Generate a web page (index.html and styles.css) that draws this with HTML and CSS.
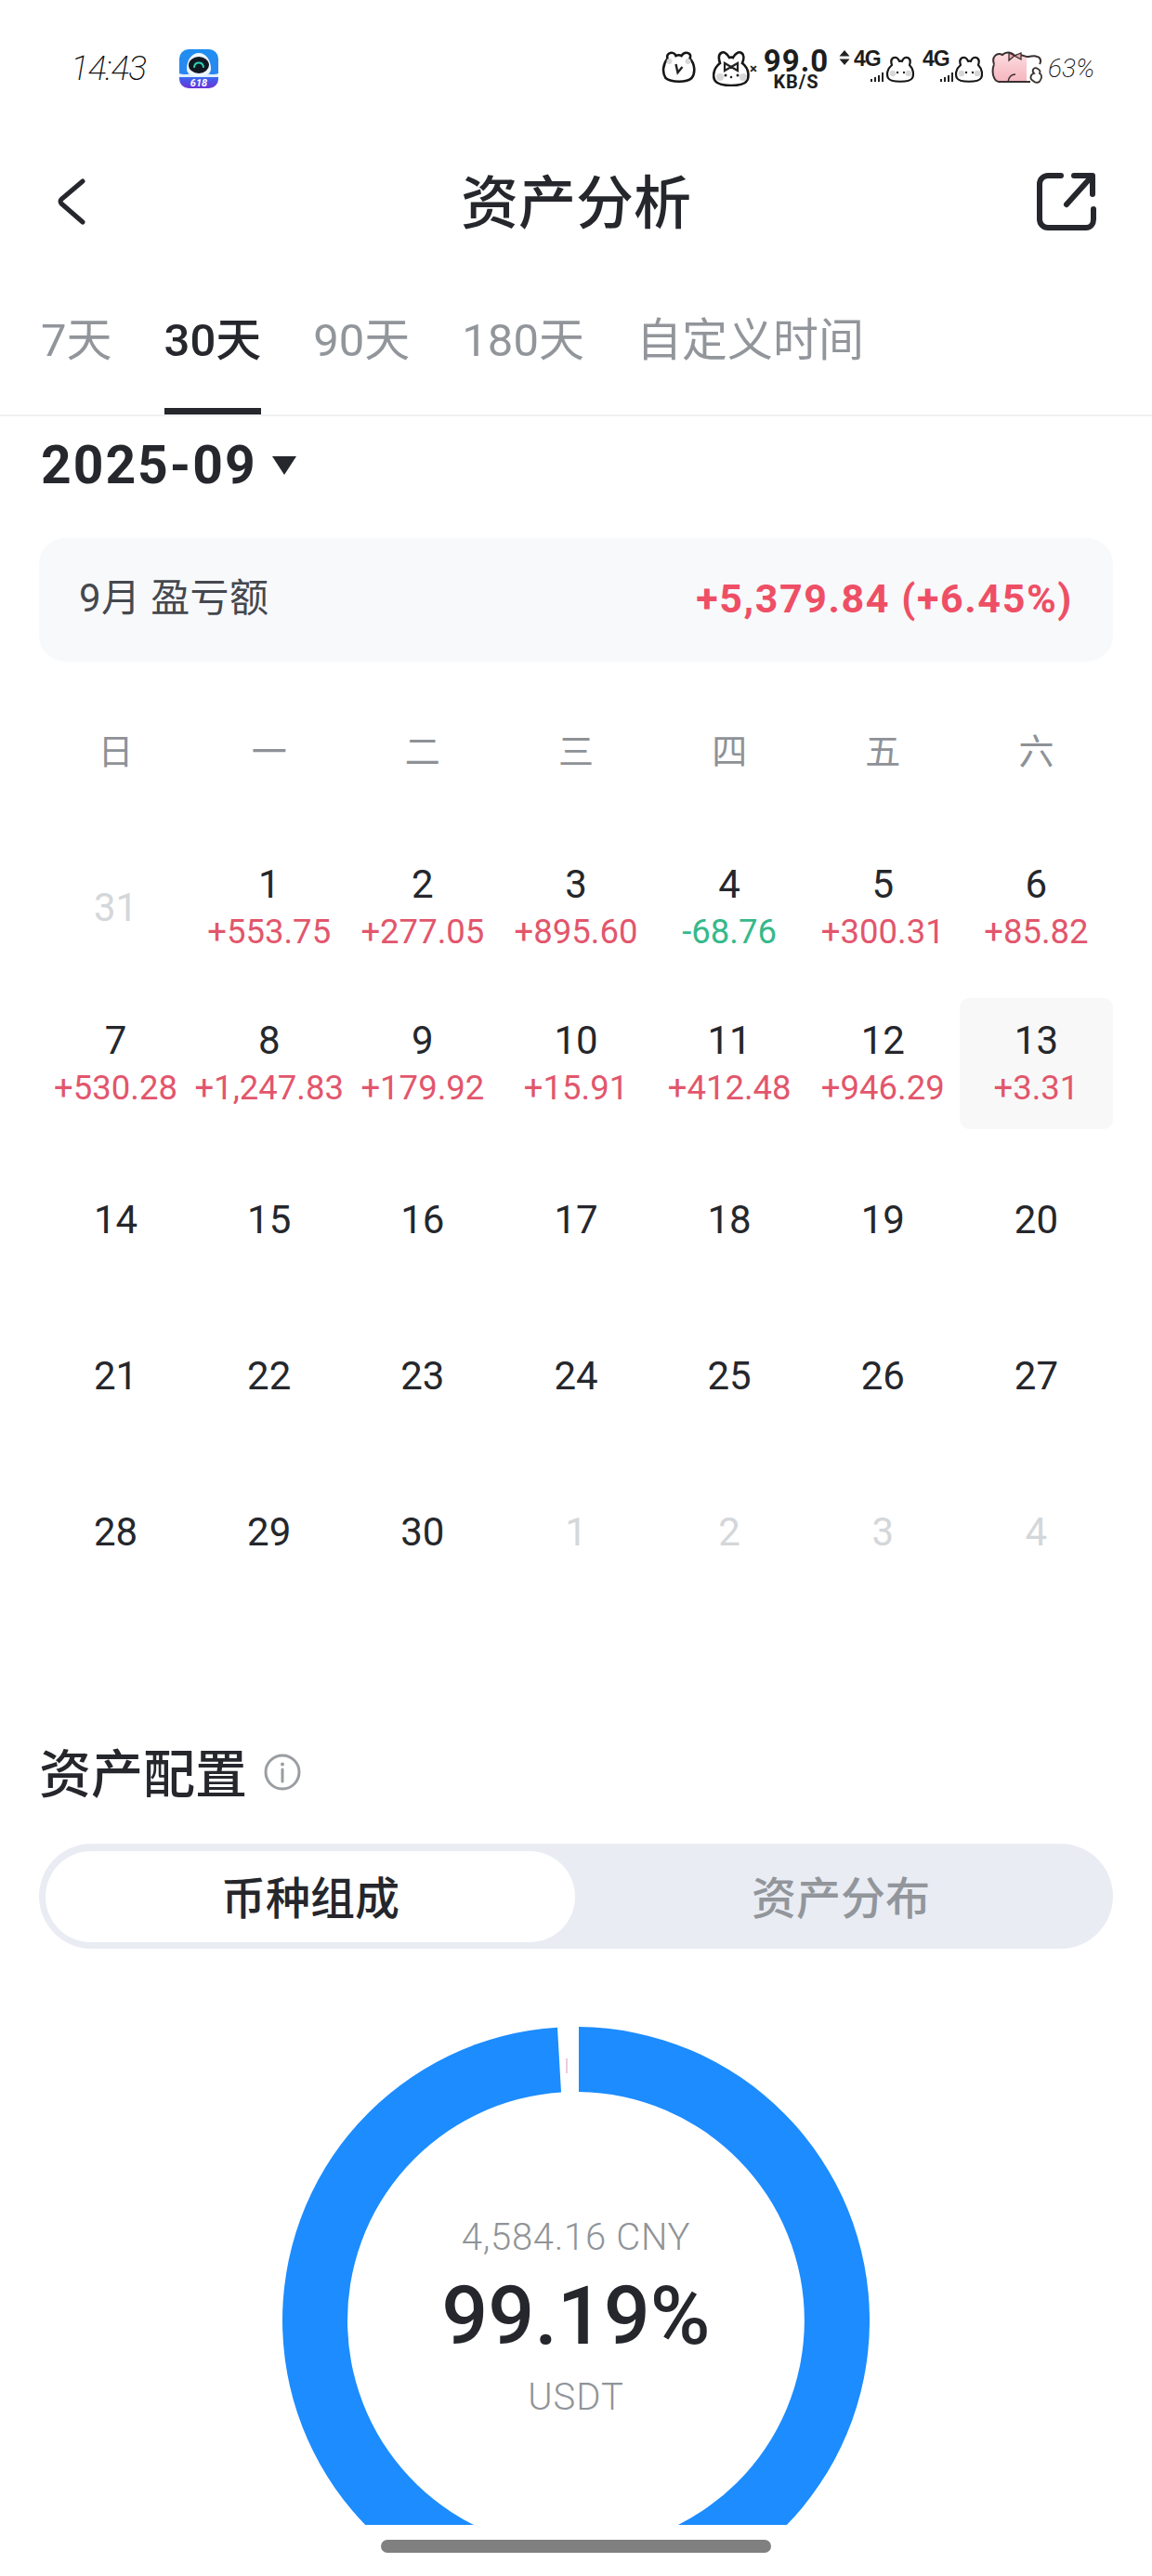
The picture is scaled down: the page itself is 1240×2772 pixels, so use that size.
FILE: index.html
```html
<!DOCTYPE html>
<html lang="zh-CN">
<head>
<meta charset="utf-8">
<title>资产分析</title>
<link rel="stylesheet" href="styles.css">
</head>
<body>
<svg class="defs" width="0" height="0" aria-hidden="true">
  <defs>
    <linearGradient id="appg" x1="0" y1="0" x2="0" y2="1">
      <stop offset="0" stop-color="#1f8ff0"/><stop offset=".62" stop-color="#2a86f2"/><stop offset=".8" stop-color="#4a55e8"/><stop offset="1" stop-color="#6a35d8"/>
    </linearGradient>
    <linearGradient id="pigg" x1="0" y1="0" x2="0" y2="1">
      <stop offset="0" stop-color="#fbdde0"/><stop offset="1" stop-color="#f6b5bf"/>
    </linearGradient>
    <symbol id="bunny" viewBox="0 0 30 30">
      <path d="M6 11C3 2 12 0 14 7c1.500-.5 2.500-.5 3 0C19 0 28 2 25 11c4 4 5 10 3 14-3 5-23 5-26 0-2-4-1-10 4-14Z" fill="#fff" stroke="#161616" stroke-width="2.200" stroke-linejoin="round"/>
      <circle cx="7" cy="20" r="3.200" fill="#d8d8d8"/><circle cx="24" cy="20" r="3.200" fill="#d8d8d8"/>
      <circle cx="12" cy="19" r="1.200" fill="#222"/><circle cx="19" cy="19" r="1.200" fill="#222"/>
    </symbol>
    <symbol id="signal" viewBox="0 0 16 11">
      <path d="M1 8v3M5 6v5M9 4v7M13 1v10" stroke="#222" stroke-width="2" fill="none"/>
    </symbol>
  </defs>
</svg>

<div class="phone">
  <header class="status">
    <div class="status-left">
      <span class="time">14:43</span>
      <svg class="app" viewBox="0 0 42 42">
        <rect width="42" height="42" rx="10" fill="url(#appg)"/>
        <path d="M0 26c8 3 12-1 21-1s13 4 21 1v4H0Z" fill="#dff0ff"/>
        <path d="M8 21C8 11 14 4 21 4s13 7 13 17c0 6-6 8-13 8S8 27 8 21Z" fill="#eef7ff"/>
        <ellipse cx="21" cy="17" rx="11" ry="9" fill="#111821"/>
        <path d="M16 19c1-6 9-6 10 0" stroke="#29d3b8" stroke-width="2" fill="none" stroke-linecap="round"/>
        <text x="21" y="39.500" class="app-text">618</text>
      </svg>
    </div>
    <div class="status-right">
      <svg class="ic-clock" viewBox="0 0 36 36">
        <path d="M6 8C4 1 13 0 15 5c2-1 4-1 6 0 3-5 12-4 9 3 6 6 6 16 2 21-5 5-22 5-28 0-4-6-3-15 2-21Z" fill="#fff" stroke="#161616" stroke-width="2.600"/>
        <circle cx="8" cy="11" r="3" fill="#d8d8d8"/><circle cx="28" cy="11" r="3" fill="#d8d8d8"/>
        <path d="M15 14l2 9 5-6" stroke="#222" stroke-width="2.400" fill="none"/>
      </svg>
      <svg class="ic-bow" viewBox="0 0 40 40">
        <path d="M8 15C4 3 13-1 18 9c2-.5 3-.5 4 0C27-1 37 3 32 15c8 6 8 17 3 21-6 4-24 4-30 0-6-4-5-15 3-21Z" fill="#fff" stroke="#161616" stroke-width="2.600"/>
        <circle cx="8" cy="30" r="4" fill="#d8d8d8"/><circle cx="33" cy="30" r="4" fill="#d8d8d8"/>
        <path d="M20 19l-7-4v8ZM20 19l7-4v8Z" fill="#fff" stroke="#222" stroke-width="2.200"/>
        <circle cx="14" cy="28" r="1.500" fill="#222"/><circle cx="20" cy="30" r="1.300" fill="#222"/><circle cx="27" cy="28" r="1.500" fill="#222"/>
      </svg>
      <span class="cross">×</span>
      <div class="speed"><span class="speed-num">99.0</span><span class="speed-unit">KB/S</span></div>
      <svg class="ic-arrows" viewBox="0 0 12 16"><path d="M6 0l5.500 6.500H.5ZM6 16l5.500-6.500H.5Z" fill="#222"/></svg>
      <span class="net">4G</span>
      <svg class="ic-signal first"><use href="#signal"/></svg>
      <svg class="ic-bunny"><use href="#bunny"/></svg>
      <span class="net second">4G</span>
      <svg class="ic-signal"><use href="#signal"/></svg>
      <svg class="ic-bunny next"><use href="#bunny"/></svg>
      <svg class="ic-pig" viewBox="0 0 60 37">
        <path d="M3 14C0 6 6 1 12 4c4-4 10-3 13 1 6-2 10 0 14 1 5 0 9-2 11 0 4 0 5 5 3 8 2 4 2 8 0 12-1 4-3 6-5 6H8C2 32 0 22 3 14Z" fill="#fff"/>
        <path d="M3 14C0 6 6 1 12 4c4-4 10-3 13 1 6-2 10 0 13 1v27H8C2 32 0 22 3 14Z" fill="url(#pigg)"/>
        <path d="M38 6c5 0 9-2 11 0 4 0 5 5 3 8M3 14C0 6 6 1 12 4c4-4 10-3 13 1 6-2 10 0 13 1M3 14c-3 8-1 18 5 19h34" fill="none" stroke="#3a3030" stroke-width="2"/>
        <path d="M25 5l-6-3v8ZM25 5l7-3v7Z" fill="#f3a5b0" stroke="#3a3030" stroke-width="1.300"/>
        <path d="M18 33c1-6 4-8 8-8" fill="none" stroke="#3a3030" stroke-width="1.500"/>
        <path d="M50 19c-4-3-7 2-4 5-4 1-5 6-1 8 3 3 7 2 8-1 2-3 1-6-1-7 1-2 0-4-2-5Z" fill="#fff" stroke="#3a3030" stroke-width="1.800"/>
      </svg>
      <span class="battery">63%</span>
    </div>
  </header>

  <nav class="nav">
    <svg class="back" viewBox="0 0 30 50"><path d="M27 3 4 22.500c-1 1-1 3 0 4.500l23 20" fill="none" stroke="#25272c" stroke-width="5" stroke-linecap="round" stroke-linejoin="round"/></svg>
    <h1 class="title">资产分析</h1>
    <svg class="share" viewBox="0 0 66 66"><path d="M27 5H13C8 5 4 9 4 14v38c0 5 4 9 9 9h41c5 0 8-4 8-9V41" fill="none" stroke="#25272c" stroke-width="6" stroke-linecap="round"/><path d="M33 36 60 6M41 5h20v20" fill="none" stroke="#25272c" stroke-width="6" stroke-linecap="round" stroke-linejoin="round"/></svg>
  </nav>

  <div class="tabs">
    <span class="tab">7天</span>
    <span class="tab active">30天</span>
    <span class="tab">90天</span>
    <span class="tab">180天</span>
    <span class="tab">自定义时间</span>
  </div>

  <div class="month"><span class="month-label">2025-09</span><span class="caret"></span></div>

  <div class="summary">
    <span class="summary-label">9月 盈亏额</span>
    <span class="summary-value">+5,379.84 (+6.45%)</span>
  </div>

  <div class="weekdays">
    <span>日</span><span>一</span><span>二</span><span>三</span><span>四</span><span>五</span><span>六</span>
  </div>

  <div class="calendar">
    <div class="day muted"><b>31</b></div>
    <div class="day"><b>1</b><i class="up">+553.75</i></div>
    <div class="day"><b>2</b><i class="up">+277.05</i></div>
    <div class="day"><b>3</b><i class="up">+895.60</i></div>
    <div class="day"><b>4</b><i class="down">-68.76</i></div>
    <div class="day"><b>5</b><i class="up">+300.31</i></div>
    <div class="day"><b>6</b><i class="up">+85.82</i></div>
    <div class="day"><b>7</b><i class="up">+530.28</i></div>
    <div class="day"><b>8</b><i class="up">+1,247.83</i></div>
    <div class="day"><b>9</b><i class="up">+179.92</i></div>
    <div class="day"><b>10</b><i class="up">+15.91</i></div>
    <div class="day"><b>11</b><i class="up">+412.48</i></div>
    <div class="day"><b>12</b><i class="up">+946.29</i></div>
    <div class="day today"><b>13</b><i class="up">+3.31</i></div>
    <div class="day"><b>14</b></div>
    <div class="day"><b>15</b></div>
    <div class="day"><b>16</b></div>
    <div class="day"><b>17</b></div>
    <div class="day"><b>18</b></div>
    <div class="day"><b>19</b></div>
    <div class="day"><b>20</b></div>
    <div class="day"><b>21</b></div>
    <div class="day"><b>22</b></div>
    <div class="day"><b>23</b></div>
    <div class="day"><b>24</b></div>
    <div class="day"><b>25</b></div>
    <div class="day"><b>26</b></div>
    <div class="day"><b>27</b></div>
    <div class="day"><b>28</b></div>
    <div class="day"><b>29</b></div>
    <div class="day"><b>30</b></div>
    <div class="day muted"><b>1</b></div>
    <div class="day muted"><b>2</b></div>
    <div class="day muted"><b>3</b></div>
    <div class="day muted"><b>4</b></div>
  </div>

  <div class="section-head">
    <h2 class="section-title">资产配置</h2>
    <svg class="info" viewBox="0 0 40 40"><circle cx="20" cy="20" r="18" fill="none" stroke="#9a9da1" stroke-width="3"/><circle cx="20" cy="11.500" r="2" fill="#9a9da1"/><path d="M20 17v13" stroke="#9a9da1" stroke-width="3" stroke-linecap="round"/></svg>
  </div>

  <div class="segment">
    <span class="seg on">币种组成</span>
    <span class="seg">资产分布</span>
  </div>

  <div class="chart">
    <svg class="donut" viewBox="0 0 632 536">
      <path d="M319 .014A316 316 0 0 1 316 632A316 316 0 0 1 296 .634L300 70.520A246 246 0 0 0 316 562A246 246 0 0 0 319 70.020Z" fill="#1c8cff"/>
      <path d="M306 34v16" stroke="#d977b8" stroke-width=".8"/>
    </svg>
    <div class="chart-label">
      <span class="chart-amount">4,584.16 CNY</span>
      <span class="chart-pct">99.19%</span>
      <span class="chart-coin">USDT</span>
    </div>
  </div>

  <div class="home"></div>
</div>
</body>
</html>
```

FILE: styles.css
```css
* { box-sizing: border-box; }
html, body { margin: 0; padding: 0; background: #fff; }
body {
  width: 1240px;
  height: 2772px;
  overflow: hidden;
  color: #25272c;
  font-family: Roboto, "Noto Sans CJK SC", sans-serif;
}
.defs { position: absolute; }
.phone { display: flex; flex-direction: column; width: 1240px; height: 2772px; }

/* status bar */
.status {
  display: flex;
  justify-content: space-between;
  align-items: flex-start;
  height: 144px;
  padding: 53px 64px 0 76px;
}
.status-left { display: flex; align-items: center; height: 42px; }
.time {
  width: 117px;
  font: italic 200 37px/42px Roboto, sans-serif;
  letter-spacing: -1px;
  color: #111;
}
.app { width: 42px; height: 42px; }
.app-text { font: italic 700 11px Roboto, sans-serif; fill: #fff; text-anchor: middle; }
.status-right { display: flex; align-items: flex-start; height: 44px; }
.ic-clock { width: 37px; height: 36px; margin-top: 2px; }
.ic-bow { width: 40px; height: 40px; margin-left: 18px; }
.cross { width: 9px; margin-top: 11px; font: 700 15px/20px Roboto, sans-serif; color: #222; }
.speed { display: flex; flex-direction: column; align-items: center; width: 72px; margin-left: 5px; color: #1d1d1d; }
.speed-num { font: 700 33px/25px Roboto, sans-serif; letter-spacing: 1px; }
.speed-unit { font: 700 20px/17px Roboto, sans-serif; letter-spacing: 1px; margin-top: 2px; }
.ic-arrows { width: 12px; height: 16px; margin-left: 10px; margin-top: 1px; }
.net { margin-left: 4px; font: 700 23px/20px "Liberation Sans", sans-serif; letter-spacing: -1px; color: #1d1d1d; width: 26px; }
.net.second { margin-left: 9px; }
.ic-signal { width: 16px; height: 11px; margin-top: 24px; margin-left: -7px; }
.ic-signal.first { margin-left: -8px; }
.ic-bunny { width: 30px; height: 30px; margin-top: 6px; margin-left: 1px; }
.ic-bunny.next { margin-left: 0; }
.ic-pig { width: 60px; height: 37px; margin-left: 9px; margin-top: 2px; }
.battery {
  width: 48px;
  margin-left: 1px;
  margin-top: 3px;
  font: italic 200 28px/36px Roboto, sans-serif;
  color: #111;
}

/* nav */
.nav {
  display: grid;
  grid-template-columns: 1fr auto 1fr;
  align-items: center;
  height: 146px;
  padding: 0 59px;
}
.back { width: 30px; height: 50px; margin-left: 3px; }
.title {
  margin: 0 0 6px;
  font: 500 62px/80px "Noto Sans CJK SC", sans-serif;
  color: #25272c;
}
.share { width: 66px; height: 66px; justify-self: end; }

/* tabs */
.tabs {
  display: flex;
  gap: 56px;
  height: 158px;
  padding: 0 44px;
  border-bottom: 2px solid #eff0f2;
}
.tab {
  height: 156px;
  padding-top: 47px;
  font: 400 49px/60px Roboto, "Noto Sans CJK SC", sans-serif;
  color: #92969b;
}
.tab.active {
  font-weight: 500;
  color: #25272c;
  border-bottom: 7px solid #25272c;
}

/* month */
.month { display: flex; align-items: center; height: 104px; padding: 2px 0 0 44px; }
.month-label { font: 700 57px/70px Roboto, sans-serif; letter-spacing: 2px; color: #25272c; }
.caret {
  width: 0;
  height: 0;
  margin-left: 16px;
  border-left: 13px solid transparent;
  border-right: 13px solid transparent;
  border-top: 20px solid #25272c;
}

/* summary */
.summary {
  display: flex;
  justify-content: space-between;
  align-items: center;
  height: 133px;
  margin: 27px 42px 0;
  padding: 0 43px 3px;
  border-radius: 28px;
  background: #f8f9fb;
}
.summary-label { font: 400 42px/50px Roboto, "Noto Sans CJK SC", sans-serif; letter-spacing: .4px; color: #45484e; }
.summary-value { font: 700 43px/50px Roboto, sans-serif; letter-spacing: 1.600px; color: #ee4f65; }

/* calendar */
.weekdays {
  display: grid;
  grid-template-columns: repeat(7, 1fr);
  height: 60px;
  margin: 64px 42px 70px;
  font: 400 38px/60px "Noto Sans CJK SC", sans-serif;
  color: #8e9297;
  text-align: center;
}
.calendar {
  display: grid;
  grid-template-columns: repeat(7, 1fr);
  grid-auto-rows: 141px;
  row-gap: 27px;
  margin: 0 42px;
}
.day {
  display: flex;
  flex-direction: column;
  justify-content: center;
  align-items: center;
  border-radius: 10px;
}
.day b { font: 400 42px/50px Roboto, sans-serif; color: #25272c; }
.day i { margin-top: 5px; font: 400 36.500px/42px Roboto, sans-serif; font-style: normal; white-space: nowrap; }
.day b:not(:only-child) { margin-top: -3px; }
.day.muted b { color: #d4d7da; }
.day.today { background: #f8f8f8; }
.up { color: #e2566c; }
.down { color: #36b98b; }

/* asset section */
.section-head {
  display: flex;
  align-items: center;
  gap: 18px;
  height: 80px;
  margin: 146px 42px 0;
}
.section-title { margin: 0; font: 500 56px/80px "Noto Sans CJK SC", sans-serif; color: #25272c; }
.info { width: 40px; height: 40px; margin-top: 4px; }
.segment {
  display: grid;
  grid-template-columns: 570px 1fr;
  align-items: center;
  height: 113px;
  margin: 39px 42px 0;
  padding: 0 7px;
  border-radius: 57px;
  background: #e9ecf3;
}
.seg {
  height: 98px;
  font: 500 48px/94px "Noto Sans CJK SC", sans-serif;
  color: #92969b;
  text-align: center;
}
.seg.on { border-radius: 49px; background: #fff; color: #25272c; }

.chart {
  position: relative;
  width: 632px;
  height: 536px;
  margin: 84px auto 0;
}
.donut { display: block; width: 632px; height: 536px; }
.chart-label {
  position: absolute;
  top: 196px;
  left: 0;
  right: 0;
  display: flex;
  flex-direction: column;
  align-items: center;
}
.chart-amount { font: 300 40px/62px Roboto, sans-serif; letter-spacing: .7px; color: #909498; }
.chart-pct { font: 500 88px/105px Roboto, sans-serif; color: #25272c; }
.chart-coin { margin-top: 5px; font: 300 40px/62px Roboto, sans-serif; letter-spacing: 1px; color: #909498; }

.home {
  width: 420px;
  height: 14px;
  margin: 16px auto 0;
  border-radius: 7px;
  background: #808080;
}
```
